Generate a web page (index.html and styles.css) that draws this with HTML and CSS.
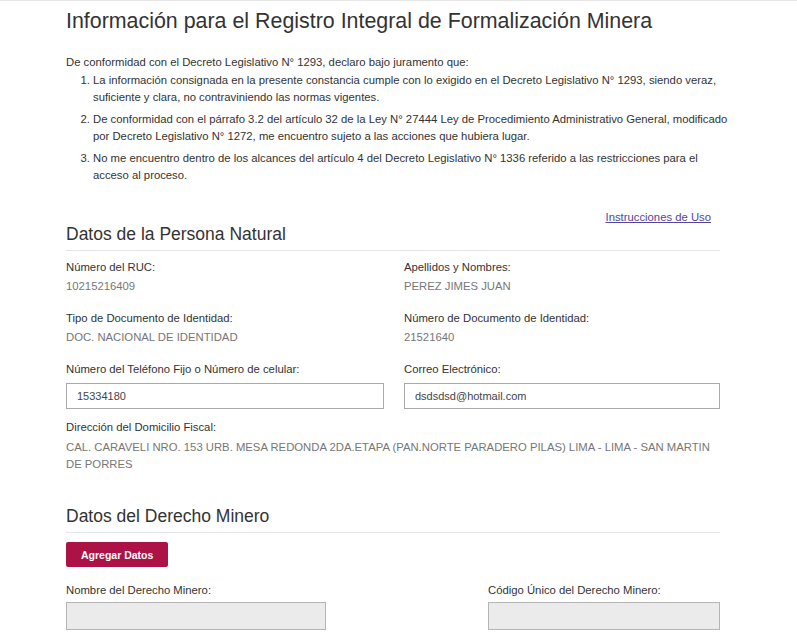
FILE: index.html
```html
<!DOCTYPE html>
<html lang="es">
<head>
  <meta charset="utf-8">
  <title>Registro Integral de Formalización Minera</title>
  <link rel="stylesheet" href="styles.css">
</head>
<body>
  <main class="container">
    <h1>Información para el Registro Integral de Formalización Minera</h1>
    <p class="intro">De conformidad con el Decreto Legislativo N° 1293, declaro bajo juramento que:</p>
    <ol class="oath">
      <li>La información consignada en la presente constancia cumple con lo exigido en el Decreto Legislativo N° 1293, siendo veraz, suficiente y clara, no contraviniendo las normas vigentes.</li>
      <li>De conformidad con el párrafo 3.2 del artículo 32 de la Ley N° 27444 Ley de Procedimiento Administrativo General, modificado por Decreto Legislativo N° 1272, me encuentro sujeto a las acciones que hubiera lugar.</li>
      <li>No me encuentro dentro de los alcances del artículo 4 del Decreto Legislativo N° 1336 referido a las restricciones para el acceso al proceso.</li>
    </ol>

    <div class="help"><a href="#">Instrucciones de Uso</a></div>
    <h2>Datos de la Persona Natural</h2>
    <div class="grid">
      <div class="field">
        <label>Número del RUC:</label>
        <div class="value">10215216409</div>
      </div>
      <div class="field">
        <label>Apellidos y Nombres:</label>
        <div class="value">PEREZ JIMES JUAN</div>
      </div>
      <div class="field">
        <label>Tipo de Documento de Identidad:</label>
        <div class="value">DOC. NACIONAL DE IDENTIDAD</div>
      </div>
      <div class="field">
        <label>Número de Documento de Identidad:</label>
        <div class="value">21521640</div>
      </div>
      <div class="field">
        <label>Número del Teléfono Fijo o Número de celular:</label>
        <input type="text" value="15334180">
      </div>
      <div class="field">
        <label>Correo Electrónico:</label>
        <input type="text" value="dsdsdsd@hotmail.com">
      </div>
      <div class="field wide">
        <label>Dirección del Domicilio Fiscal:</label>
        <div class="value">CAL. CARAVELI NRO. 153 URB. MESA REDONDA 2DA.ETAPA (PAN.NORTE PARADERO PILAS) LIMA - LIMA - SAN MARTIN DE PORRES</div>
      </div>
    </div>

    <h2 class="second">Datos del Derecho Minero</h2>
    <button class="btn">Agregar Datos</button>
    <div class="grid minero">
      <div class="field">
        <label>Nombre del Derecho Minero:</label>
        <input type="text" disabled>
      </div>
      <div class="field">
        <label>Código Único del Derecho Minero:</label>
        <input type="text" disabled>
      </div>
    </div>
  </main>
</body>
</html>
```

FILE: styles.css
```css
html,body{
  margin: 0;
  padding: 0;
  background: #fff;
  font-family: "Liberation Sans", Arial, sans-serif;
  font-size: 11.3px;
  color: #333;
}
body{
  border-top: 1px solid #e6e6e6;
}
.container{
  width: 654px;
  margin-left: 66px;
}
h1{
  margin: 7px 0 0;
  font-size: 21.4px;
  font-weight: normal;
  line-height: 26px;
}
.intro{
  margin: 20px 0 0;
  line-height: 17px;
}
.oath{
  margin: 1px -14px 0 0;
  padding-left: 27px;
}
.oath li{
  line-height: 17px;
  margin-top: 5px;
}
.oath li:first-child{
  margin-top: 0;
}
.help{
  margin-top: 26px;
  text-align: right;
  padding-right: 9px;
  line-height: 14px;
}
.help a{
  color: #55459b;
  text-decoration: underline;
}
h2{
  margin: 0;
  padding-bottom: 6px;
  border-bottom: 1px solid #e5e5e5;
  font-size: 17.5px;
  font-weight: normal;
  line-height: 20px;
}
h2.second{
  margin-top: 28px;
}
.grid{
  display: grid;
  grid-template-columns: 318px 316px;
  column-gap: 20px;
  row-gap: 10px;
  margin-top: 8px;
}
.field label{
  display: block;
  line-height: 17px;
}
.field .value{
  margin-top: 2px;
  margin-bottom: 5px;
  line-height: 17px;
  color: #777;
}
.field.wide{
  grid-column: 1 / -1;
}
.field.wide .value{
  margin-top: 3px;
}
.field input{
  display: block;
  box-sizing: border-box;
  width: 100%;
  height: 26px;
  margin-top: 5px;
  padding: 0 10px;
  border: 1px solid #aaa;
  font-family: inherit;
  font-size: 11px;
  color: #444;
}
.btn{
  display: block;
  margin-top: 9px;
  height: 25px;
  padding: 0 15px;
  border: 0;
  border-radius: 2px;
  background: #ac1246;
  color: #fff;
  font-family: inherit;
  font-size: 10.5px;
  font-weight: bold;
}
.minero{
  grid-template-columns: 260px 232px;
  justify-content: space-between;
  margin-top: 15px;
}
.minero input{
  height: 28px;
  margin-top: 3px;
  background: #ebebeb;
  border-color: #b5b5b5;
}
```
